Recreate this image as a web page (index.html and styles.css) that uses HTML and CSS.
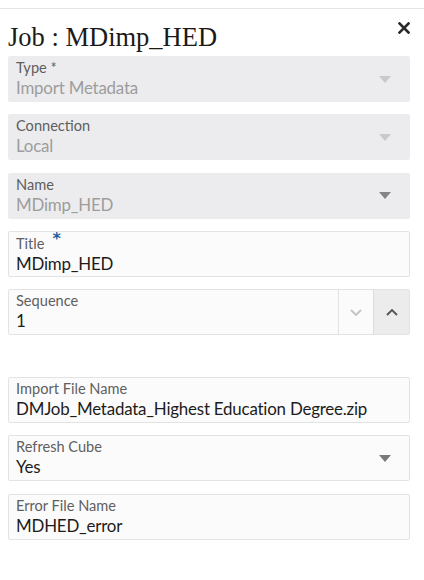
FILE: index.html
```html
<!DOCTYPE html>
<html>
<head>
<meta charset="utf-8">
<link rel="stylesheet" href="styles.css">
</head>
<body>
<div class="panel">
  <div class="header">
    <h1 class="title">Job : MDimp_HED</h1>
    <button class="close" aria-label="Close">
      <svg width="12" height="12" viewBox="0 0 12 12"><path d="M1.5 1.5 L10.5 10.5 M10.5 1.5 L1.5 10.5" stroke="#2a2a2a" stroke-width="2.6" stroke-linecap="square"/></svg>
    </button>
  </div>
  <div class="fields">
    <div class="field disabled">
      <div class="text">
        <div class="label">Type *</div>
        <div class="value">Import Metadata</div>
      </div>
      <span class="caret light"></span>
    </div>
    <div class="field disabled">
      <div class="text">
        <div class="label">Connection</div>
        <div class="value">Local</div>
      </div>
      <span class="caret light"></span>
    </div>
    <div class="field disabled">
      <div class="text">
        <div class="label">Name</div>
        <div class="value">MDimp_HED</div>
      </div>
      <span class="caret mid"></span>
    </div>
    <div class="field">
      <div class="text">
        <div class="label">Title<span class="req">*</span></div>
        <div class="value">MDimp_HED</div>
      </div>
    </div>
    <div class="field spin">
      <div class="text">
        <div class="label">Sequence</div>
        <div class="value">1</div>
      </div>
      <div class="spin-btn down">
        <svg width="14" height="9" viewBox="0 0 14 9"><path d="M2 2 L7 7 L12 2" fill="none" stroke="#c3c3c3" stroke-width="1.8"/></svg>
      </div>
      <div class="spin-btn up">
        <svg width="14" height="9" viewBox="0 0 14 9"><path d="M2 7 L7 2 L12 7" fill="none" stroke="#555" stroke-width="1.9"/></svg>
      </div>
    </div>
  </div>
  <div class="fields second">
    <div class="field">
      <div class="text">
        <div class="label">Import File Name</div>
        <div class="value">DMJob_Metadata_Highest Education Degree.zip</div>
      </div>
    </div>
    <div class="field">
      <div class="text">
        <div class="label">Refresh Cube</div>
        <div class="value">Yes</div>
      </div>
      <span class="caret dark"></span>
    </div>
    <div class="field">
      <div class="text">
        <div class="label">Error File Name</div>
        <div class="value">MDHED_error</div>
      </div>
    </div>
  </div>
</div>
</body>
</html>
```

FILE: styles.css
```css
html, body {
  margin: 0;
  padding: 0;
  background: #ffffff;
}
body {
  font-family: "Lato", "Open Sans", sans-serif;
  color: #161513;
}
.panel {
  margin-top: 8px;
  border-top: 1px solid #e4e4e4;
  padding: 0 14px 0 8px;
}
.header {
  display: flex;
  align-items: flex-start;
  justify-content: space-between;
  padding-top: 13px;
  height: 34px;
}
.title {
  margin: 0;
  font-family: "Liberation Serif", "DejaVu Serif", serif;
  font-weight: normal;
  font-size: 26.5px;
  line-height: 30px;
  color: #1b1a18;
}
.close {
  border: 0;
  background: none;
  padding: 0;
  margin: 0;
  width: 12px;
  height: 12px;
  display: block;
}
.close svg { display: block; }
.fields {
  display: flex;
  flex-direction: column;
  gap: 12.3px;
}
.fields.second {
  margin-top: 42px;
}
.field {
  display: flex;
  align-items: stretch;
  height: 46px;
  box-sizing: border-box;
  border: 1px solid #e3e3e3;
  border-radius: 2px;
  background: #fbfbfc;
}
.field.disabled {
  background: #ececee;
  border-color: #ececee;
}
.text {
  flex: 1;
  padding: 2px 7px 0 7px;
  min-width: 0;
}
.label {
  font-size: 14.6px;
  line-height: 18px;
  color: #5f5f5f;
  white-space: nowrap;
}
.value {
  font-size: 16.9px;
  line-height: 21px;
  letter-spacing: -0.2px;
  color: #1d1c1a;
  white-space: nowrap;
}
.disabled .label { color: #5e5e5e; }
.disabled .value { color: #9d9d9d; }
.req {
  display: inline-block;
  color: #1d5f9e;
  font-family: "DejaVu Sans", sans-serif;
  font-weight: bold;
  font-size: 16px;
  line-height: 10px;
  vertical-align: 5px;
  margin-left: 8px;
}
.caret {
  align-self: center;
  width: 0;
  height: 0;
  border-left: 6px solid transparent;
  border-right: 6px solid transparent;
  border-top: 7px solid #c9c9cb;
  margin-right: 18px;
}
.caret.mid { border-top-color: #858585; }
.caret.dark { border-top-color: #7a7a7a; }
.spin-btn {
  width: 34px;
  border-left: 1px solid #e3e3e3;
  display: flex;
  align-items: center;
  justify-content: center;
}
.spin-btn.up {
  background: #ececec;
  border-left-color: #dcdcdc;
  width: 35px;
}
```
